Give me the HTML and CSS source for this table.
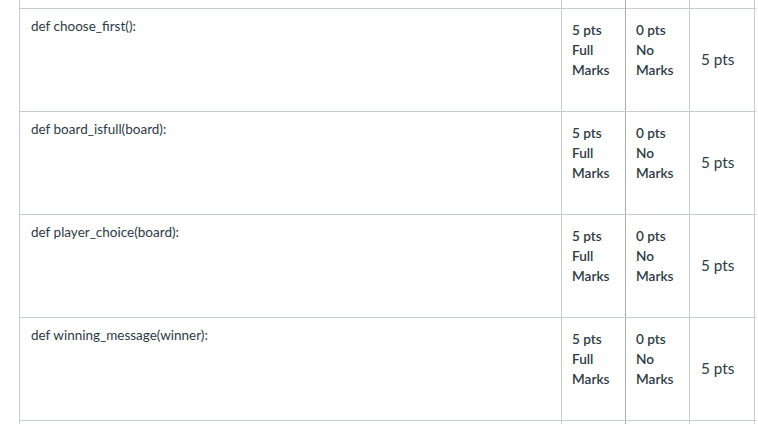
FILE: index.html
```html
<!DOCTYPE html>
<html>
<head>
<meta charset="utf-8">
<link rel="stylesheet" href="styles.css">
</head>
<body>
<div class="rubric">
  <div class="row partial">
    <div class="cell desc"></div>
    <div class="cell rating first"></div>
    <div class="cell rating"></div>
    <div class="cell points"></div>
  </div>
  <div class="row">
    <div class="cell desc">def choose_first():</div>
    <div class="cell rating first"><div>5 pts</div><div>Full Marks</div></div>
    <div class="cell rating"><div>0 pts</div><div>No Marks</div></div>
    <div class="cell points">5 pts</div>
  </div>
  <div class="row">
    <div class="cell desc">def board_isfull(board):</div>
    <div class="cell rating first"><div>5 pts</div><div>Full Marks</div></div>
    <div class="cell rating"><div>0 pts</div><div>No Marks</div></div>
    <div class="cell points">5 pts</div>
  </div>
  <div class="row">
    <div class="cell desc">def player_choice(board):</div>
    <div class="cell rating first"><div>5 pts</div><div>Full Marks</div></div>
    <div class="cell rating"><div>0 pts</div><div>No Marks</div></div>
    <div class="cell points">5 pts</div>
  </div>
  <div class="row">
    <div class="cell desc">def winning_message(winner):</div>
    <div class="cell rating first"><div>5 pts</div><div>Full Marks</div></div>
    <div class="cell rating"><div>0 pts</div><div>No Marks</div></div>
    <div class="cell points">5 pts</div>
  </div>
  <div class="row partial">
    <div class="cell desc"></div>
    <div class="cell rating first"></div>
    <div class="cell rating"></div>
    <div class="cell points"></div>
  </div>
</div>
</body>
</html>
```

FILE: styles.css
```css
html, body {
  margin: 0;
  padding: 0;
  background: #ffffff;
}
body {
  font-family: Lato, "Liberation Sans", sans-serif;
  color: #2d3b45;
  overflow: hidden;
}
.rubric {
  margin-left: 19px;
  width: 736px;
  border-left: 1px solid #c7cdd1;
}
.row {
  display: grid;
  grid-template-columns: 542px 64px 64px 65px;
  height: 103px;
  box-sizing: border-box;
  border-bottom: 1px solid #c7cdd1;
}
.row.partial {
  height: 9px;
}
.row:last-child {
  border-bottom: none;
  height: 20px;
}
.cell {
  border-right: 1px solid #c7cdd1;
  box-sizing: border-box;
}
.cell.rating.first {
  border-right-color: #a5afb5;
}
.desc {
  padding: 7px 10px 0 11px;
  font-size: 13.5px;
  line-height: 20px;
}
.rating {
  padding: 11px 4px 0 10px;
  font-size: 13.6px;
  line-height: 20px;
  font-weight: 600;
}
.points {
  display: flex;
  align-items: center;
  padding-left: 11px;
  padding-bottom: 3px;
  font-size: 15.3px;
}
```
